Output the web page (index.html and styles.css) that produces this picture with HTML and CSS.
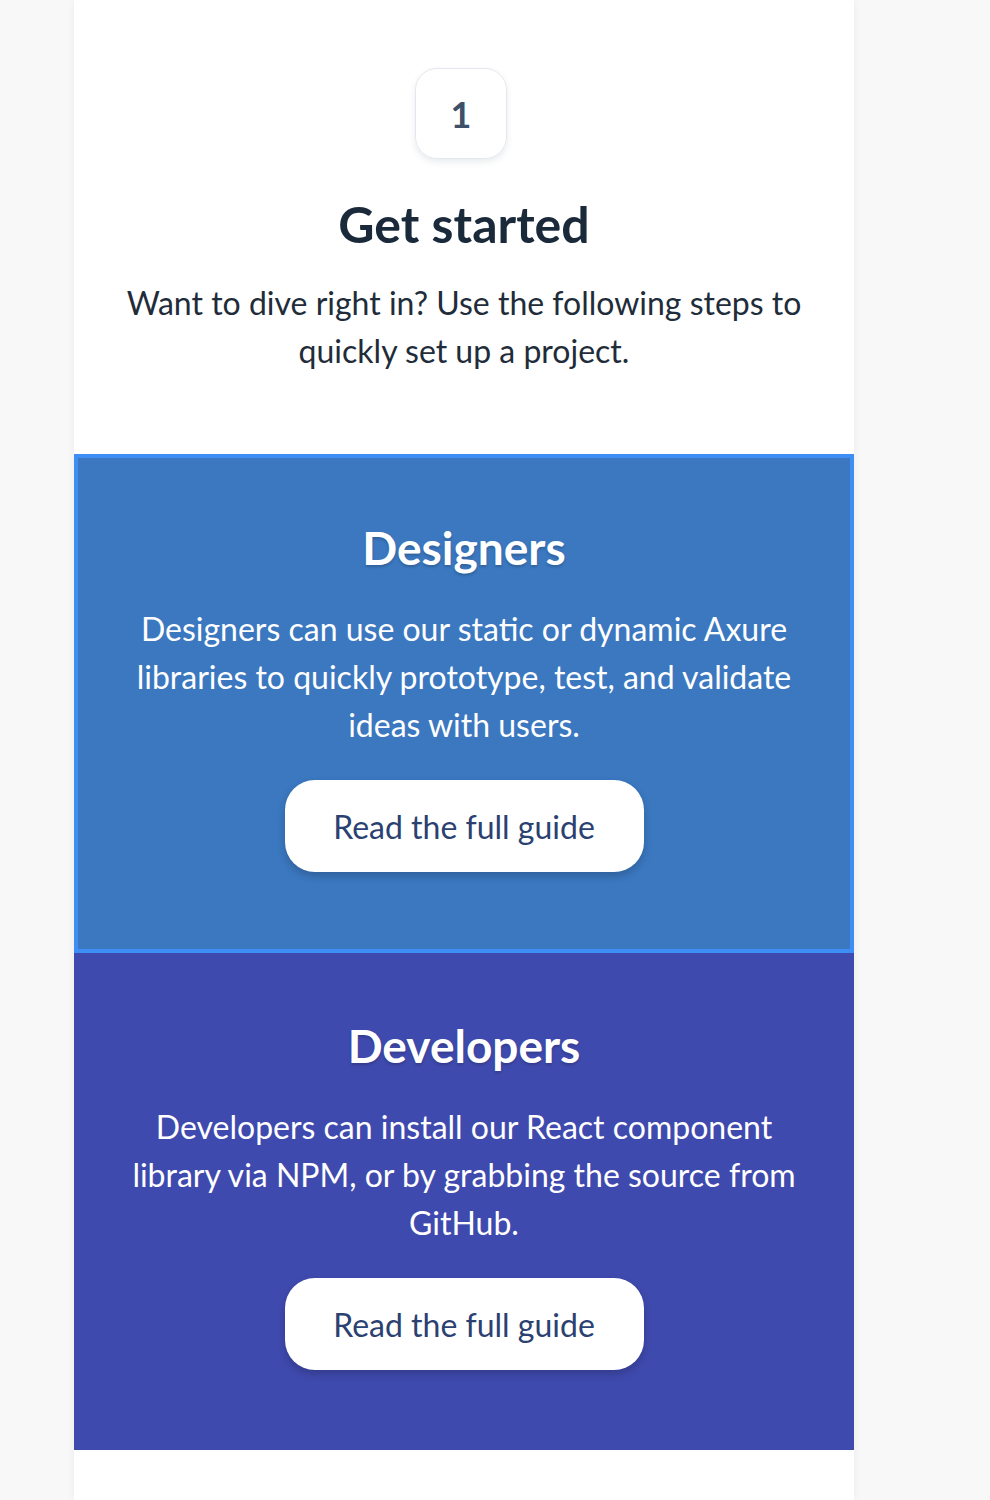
FILE: index.html
```html
<!DOCTYPE html>
<html lang="en">
<head>
<meta charset="utf-8">
<title>Get started</title>
<link rel="stylesheet" href="styles.css">
</head>
<body>
<main class="page">
  <section class="intro">
    <div class="step">1</div>
    <h1 class="intro-title">Get started</h1>
    <p class="intro-text">Want to dive right in? Use the following steps to quickly set up a project.</p>
  </section>
  <section class="panel panel-designers">
    <h2 class="panel-title">Designers</h2>
    <p class="panel-text">Designers can use our static or dynamic Axure libraries to quickly prototype, test, and validate ideas with users.</p>
    <a class="btn" href="#">Read the full guide</a>
  </section>
  <section class="panel panel-developers">
    <h2 class="panel-title">Developers</h2>
    <p class="panel-text">Developers can install our React component library via NPM, or by grabbing the source from GitHub.</p>
    <a class="btn" href="#">Read the full guide</a>
  </section>
  <div class="tail"></div>
</main>
</body>
</html>
```
FILE: styles.css
```css
* { box-sizing: border-box; }
html, body { margin: 0; padding: 0; }
body {
  background: #f8f8f8;
  font-family: Lato, "Open Sans", sans-serif;
  color: #1b2a3a;
}
.page {
  width: 780px;
  margin-left: 74px;
  background: #fff;
  box-shadow: 0 0 8px rgba(0,0,0,0.06);
  min-height: 1500px;
}
.intro {
  display: flex;
  flex-direction: column;
  align-items: center;
  padding: 68px 45px 79px;
  text-align: center;
}
.step {
  width: 92px;
  height: 91px;
  margin-left: -6px;
  border: 1px solid #e4e8ee;
  border-radius: 22px;
  box-shadow: 0 3px 6px rgba(40,60,90,0.10);
  display: flex;
  align-items: center;
  justify-content: center;
  font-size: 36px;
  font-weight: 700;
  color: #3e4f68;
}
.intro-title {
  margin: 35px 0 0;
  font-size: 50px;
  line-height: 60px;
  font-weight: 700;
  color: #1b2a3a;
}
.intro-text {
  margin: 25px 0 0;
  font-size: 32px;
  line-height: 48px;
  color: #1f2c3a;
}
.panel {
  display: flex;
  flex-direction: column;
  align-items: center;
  text-align: center;
  color: #fff;
}
.panel-designers {
  background: #3b78c0;
  border: 4px solid #3e8ff5;
  padding: 62px 41px 77px;
}
.panel-developers {
  background: #3f4aae;
  padding: 65px 45px 80px;
}
.panel-title {
  margin: 0;
  font-size: 46px;
  line-height: 56px;
  font-weight: 700;
  text-shadow: 0 2px 3px rgba(0,0,0,0.2);
}
.panel-text {
  margin: 29px 0 31px;
  font-size: 32px;
  line-height: 48px;
}
.btn {
  display: flex;
  align-items: center;
  justify-content: center;
  width: 359px;
  height: 92px;
  background: #fff;
  border-radius: 30px;
  box-shadow: 0 4px 8px rgba(0,0,0,0.2);
  color: #2a4171;
  font-size: 32px;
  text-decoration: none;
}
.tail { height: 50px; }
```
